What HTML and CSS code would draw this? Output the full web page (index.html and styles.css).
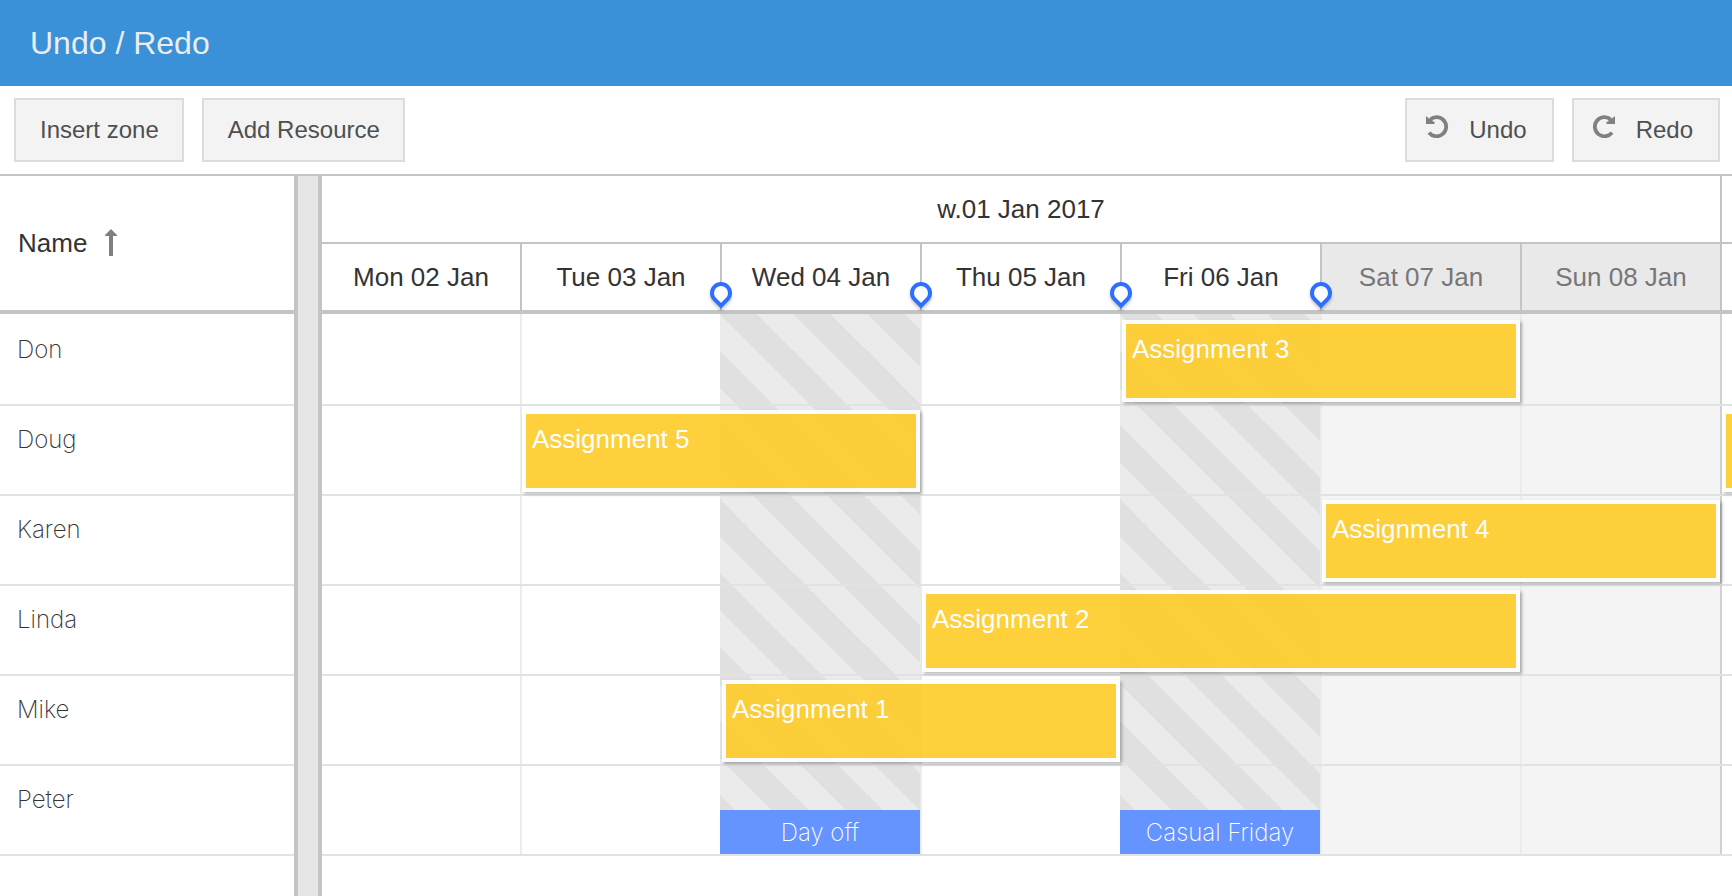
FILE: index.html
```html
<!DOCTYPE html>
<html lang="en">
<head>
  <meta charset="UTF-8" />
  <meta name="viewport" content="width=device-width, initial-scale=1.0"/>
  <title>Undo / Redo</title>
  <link rel="stylesheet" href="styles.css">
</head>
<body>

<header class="title-bar">
  <h1>Undo / Redo</h1>
</header>

<div class="toolbar">
  <button type="button" class="btn">Insert zone</button>
  <button type="button" class="btn">Add Resource</button>
  <span class="spacer"></span>
  <button type="button" class="btn btn-icon">
    <svg viewBox="0 0 24 24" aria-hidden="true">
      <path d="M5.3 5.4A9.6 9.6 0 1 1 4 18.6" fill="none" stroke="currentColor" stroke-width="3.8"/>
      <path d="M1 2L4.5 5Q6 3 8 6Q6 7.500 9.500 7.800V10H1Z" fill="currentColor"/>
    </svg>
    Undo
  </button>
  <button type="button" class="btn btn-icon">
    <svg viewBox="0 0 24 24" aria-hidden="true" class="flip">
      <path d="M5.3 5.4A9.6 9.6 0 1 1 4 18.6" fill="none" stroke="currentColor" stroke-width="3.8"/>
      <path d="M1 2L4.5 5Q6 3 8 6Q6 7.500 9.500 7.800V10H1Z" fill="currentColor"/>
    </svg>
    Redo
  </button>
</div>

<main class="scheduler">
  <!-- Locked resource grid -->
  <section class="resources">
    <div class="name-header">
      Name
      <svg viewBox="0 0 12 28" aria-hidden="true"><path d="M6 0L12 6V7H8V27H4V7H0V6Z" fill="currentColor"/></svg>
    </div>
    <ul class="names">
      <li>Don</li>
      <li>Doug</li>
      <li>Karen</li>
      <li>Linda</li>
      <li>Mike</li>
      <li>Peter</li>
    </ul>
  </section>

  <div class="splitter"></div>

  <!-- Time axis and assignments -->
  <section class="timeline">
    <div class="weeks">
      <div class="week">w.01 Jan 2017</div>
      <div class="week"></div>
    </div>
    <div class="days">
      <div class="day">Mon 02 Jan</div>
      <div class="day">Tue 03 Jan<span class="pin"></span></div>
      <div class="day">Wed 04 Jan<span class="pin"></span></div>
      <div class="day">Thu 05 Jan<span class="pin"></span></div>
      <div class="day">Fri 06 Jan<span class="pin"></span></div>
      <div class="day weekend">Sat 07 Jan</div>
      <div class="day weekend">Sun 08 Jan</div>
      <div class="day"></div>
    </div>
    <div class="body">
      <div class="columns">
        <div class="column"></div>
        <div class="column"></div>
        <div class="column"></div>
        <div class="column"></div>
        <div class="column"></div>
        <div class="column weekend"></div>
        <div class="column weekend week-end"></div>
        <div class="column"></div>
      </div>
      <div class="zone wed"><span>Day off</span></div>
      <div class="zone fri"><span>Casual Friday</span></div>
      <div class="rows">
        <div class="row"><div class="event start-5 span-2">Assignment 3</div></div>
        <div class="row"><div class="event start-2 span-2">Assignment 5</div><div class="event start-8 span-2"></div></div>
        <div class="row"><div class="event start-6 span-2">Assignment 4</div></div>
        <div class="row"><div class="event start-4 span-3">Assignment 2</div></div>
        <div class="row"><div class="event start-3 span-2">Assignment 1</div></div>
        <div class="row"></div>
      </div>
    </div>
  </section>
</main>

</body>
</html>
```
FILE: styles.css
```css
* {
  box-sizing: border-box;
}

body {
  display: flex;
  flex-direction: column;
  min-height: 100vh;
  margin: 0;
  overflow-x: hidden;
  background: #fff;
  color: #333;
  font-family: "Liberation Sans", Arial, sans-serif;
  font-size: 26px;
  line-height: 30px;
}

.title-bar {
  padding: 25px 30px;
  background: #3a91d8;
  color: #ececec;
}

.title-bar h1 {
  margin: 0;
  font-size: 32px;
  font-weight: 300;
  line-height: 36px;
}

.toolbar {
  display: flex;
  gap: 18px;
  padding: 12px 12px 12px 14px;
  border-bottom: 2px solid #c4c4c4;
}

.spacer {
  flex: 1;
}

.btn {
  height: 64px;
  padding: 0 23px 0 24px;
  border: 2px solid #dcdcdc;
  background: #f3f3f3;
  color: #4f4f4f;
  font-family: inherit;
  font-size: 24px;
  cursor: pointer;
}

.btn:hover {
  background: #eaeaea;
}

.btn-icon {
  display: flex;
  align-items: center;
  gap: 20px;
  padding: 0 25px 0 18px;
}

.btn-icon svg {
  width: 24px;
  height: 24px;
  margin-bottom: 8px;
  color: #808080;
}

.btn-icon .flip {
  transform: scaleX(-1);
}

.scheduler {
  display: flex;
  flex: 1;
}

.resources {
  width: 294px;
  flex-shrink: 0;
}

.name-header {
  display: flex;
  align-items: center;
  gap: 18px;
  height: 138px;
  padding: 0 18px;
  border-bottom: 4px solid #c4c4c4;
}

.name-header svg {
  width: 12px;
  height: 28px;
  color: #808080;
}

.names {
  margin: 0;
  padding: 2px 0 0;
  list-style: none;
}

.names li {
  height: 90px;
  padding: 19px 17px;
  border-bottom: 2px solid #e4e4e4;
  font-family: Inter, sans-serif;
  font-size: 24px;
  font-weight: 200;
}

.splitter {
  width: 28px;
  flex-shrink: 0;
  border: solid #c4c4c4;
  border-width: 0 4px;
  background: #e6e6e6;
  cursor: col-resize;
}

.timeline {
  flex: 1;
  min-width: 0;
  overflow: hidden;
}

.weeks,
.days,
.columns {
  display: grid;
  grid-template-columns: repeat(8, 200px);
}

.week {
  height: 68px;
  padding: 18px 0;
  border-right: 2px solid #c4c4c4;
  border-bottom: 2px solid #c4c4c4;
  text-align: center;
}

.week:first-child {
  grid-column: span 7;
}

.days {
  border-bottom: 4px solid #c4c4c4;
}

.day {
  position: relative;
  height: 66px;
  padding: 18px 0;
  border-right: 2px solid #c4c4c4;
  text-align: center;
}

.day.weekend {
  background: #e9e9e9;
  color: #777;
}

/* Zone handle, sits on the line between two days */
.pin {
  position: absolute;
  right: -12px;
  bottom: 6px;
  z-index: 1;
  width: 22px;
  height: 22px;
  border: 4px solid #2d6fff;
  border-radius: 50% 50% 0 50%;
  background: #fff;
  box-shadow: 2px 2px 3px rgba(0, 0, 0, 0.2);
  transform: rotate(45deg);
}

.body {
  position: relative;
}

.columns {
  position: absolute;
  top: 0;
  bottom: 2px;
}

.column {
  border-right: 2px solid #ebebeb;
}

.column.weekend {
  background: #f4f4f4;
}

.column.week-end {
  border-right-color: #d0d0d0;
}

.zone {
  position: absolute;
  top: 0;
  bottom: 2px;
  display: flex;
  align-items: flex-end;
  width: 200px;
  background: linear-gradient(45deg, #e0e0e0 25%, #ebebeb 25% 50%, #e0e0e0 50% 75%, #ebebeb 75%) 0 0 / 74px 74px;
}

.zone.wed {
  left: 398px;
}

.zone.fri {
  left: 798px;
}

.zone span {
  width: 100%;
  padding: 8px 0 6px;
  background: #6593ff;
  color: #fff;
  font-family: Inter, sans-serif;
  font-size: 24px;
  font-weight: 200;
  text-align: center;
}

.rows {
  position: relative;
  padding-top: 2px;
}

.row {
  display: grid;
  grid-template-columns: repeat(9, 200px);
  height: 90px;
  padding: 4px 0 2px;
  border-bottom: 2px solid #e2e2e2;
}

.event {
  grid-row: 1;
  height: 82px;
  margin-right: 2px;
  padding: 10px 6px;
  border: 4px solid #fff;
  background: #fecb27;
  box-shadow: 2px 2px 3px rgba(0, 0, 0, 0.3);
  color: #fff;
  opacity: 0.9;
}

.start-2 { grid-column-start: 2; }
.start-3 { grid-column-start: 3; }
.start-4 { grid-column-start: 4; }
.start-5 { grid-column-start: 5; }
.start-6 { grid-column-start: 6; }
.start-8 { grid-column-start: 8; }
.span-2 { grid-column-end: span 2; }
.span-3 { grid-column-end: span 3; }
```
